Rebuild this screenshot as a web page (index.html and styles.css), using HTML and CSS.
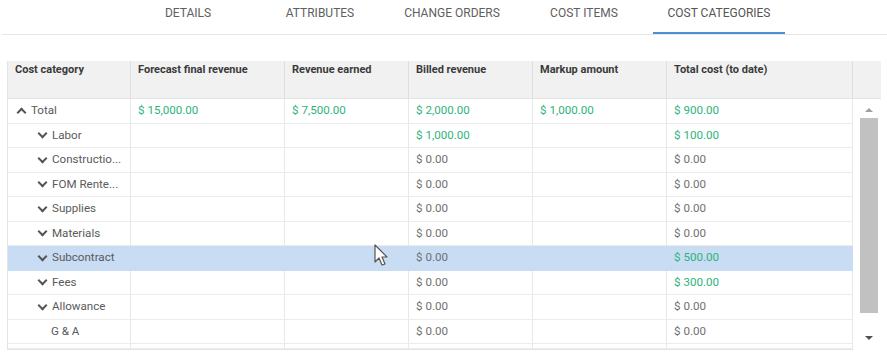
FILE: index.html
```
<!DOCTYPE html>
<html lang="en">
<head>
    <meta charset="UTF-8">
    <meta name="viewport" content="width=device-width, initial-scale=1.0">
    <title>Cost categories</title>
    <link rel="stylesheet" href="styles.css">
</head>
<body>
    <div class="tabs">
        <div class="tab">Details</div>
        <div class="tab">Attributes</div>
        <div class="tab">Change orders</div>
        <div class="tab">Cost items</div>
        <div class="tab active">Cost categories</div>
    </div>

    <div class="grid">
        <div class="grid-head">
            <div class="th c1">Cost category</div>
            <div class="th c2">Forecast final revenue</div>
            <div class="th c3">Revenue earned</div>
            <div class="th c4">Billed revenue</div>
            <div class="th c5">Markup amount</div>
            <div class="th c6">Total cost (to date)</div>
            <div class="th gutter"></div>
        </div>
        <div class="grid-body">
            <div class="rows">
                <div class="row">
                    <div class="td c1"><span class="caret up"></span>Total</div>
                    <div class="td c2 pos">$ 15,000.00</div>
                    <div class="td c3 pos">$ 7,500.00</div>
                    <div class="td c4 pos">$ 2,000.00</div>
                    <div class="td c5 pos">$ 1,000.00</div>
                    <div class="td c6 pos">$ 900.00</div>
                </div>
                <div class="row">
                    <div class="td c1 child"><span class="caret"></span>Labor</div>
                    <div class="td c2"></div>
                    <div class="td c3"></div>
                    <div class="td c4 pos">$ 1,000.00</div>
                    <div class="td c5"></div>
                    <div class="td c6 pos">$ 100.00</div>
                </div>
                <div class="row">
                    <div class="td c1 child"><span class="caret"></span>Constructio...</div>
                    <div class="td c2"></div>
                    <div class="td c3"></div>
                    <div class="td c4">$ 0.00</div>
                    <div class="td c5"></div>
                    <div class="td c6">$ 0.00</div>
                </div>
                <div class="row">
                    <div class="td c1 child"><span class="caret"></span>FOM Rente...</div>
                    <div class="td c2"></div>
                    <div class="td c3"></div>
                    <div class="td c4">$ 0.00</div>
                    <div class="td c5"></div>
                    <div class="td c6">$ 0.00</div>
                </div>
                <div class="row">
                    <div class="td c1 child"><span class="caret"></span>Supplies</div>
                    <div class="td c2"></div>
                    <div class="td c3"></div>
                    <div class="td c4">$ 0.00</div>
                    <div class="td c5"></div>
                    <div class="td c6">$ 0.00</div>
                </div>
                <div class="row">
                    <div class="td c1 child"><span class="caret"></span>Materials</div>
                    <div class="td c2"></div>
                    <div class="td c3"></div>
                    <div class="td c4">$ 0.00</div>
                    <div class="td c5"></div>
                    <div class="td c6">$ 0.00</div>
                </div>
                <div class="row selected">
                    <div class="td c1 child"><span class="caret"></span>Subcontract</div>
                    <div class="td c2"></div>
                    <div class="td c3"></div>
                    <div class="td c4">$ 0.00</div>
                    <div class="td c5"></div>
                    <div class="td c6 pos">$ 500.00</div>
                </div>
                <div class="row">
                    <div class="td c1 child"><span class="caret"></span>Fees</div>
                    <div class="td c2"></div>
                    <div class="td c3"></div>
                    <div class="td c4">$ 0.00</div>
                    <div class="td c5"></div>
                    <div class="td c6 pos">$ 300.00</div>
                </div>
                <div class="row">
                    <div class="td c1 child"><span class="caret"></span>Allowance</div>
                    <div class="td c2"></div>
                    <div class="td c3"></div>
                    <div class="td c4">$ 0.00</div>
                    <div class="td c5"></div>
                    <div class="td c6">$ 0.00</div>
                </div>
                <div class="row">
                    <div class="td c1 leaf">G &amp; A</div>
                    <div class="td c2"></div>
                    <div class="td c3"></div>
                    <div class="td c4">$ 0.00</div>
                    <div class="td c5"></div>
                    <div class="td c6">$ 0.00</div>
                </div>
                <div class="row partial">
                    <div class="td c1"></div>
                    <div class="td c2"></div>
                    <div class="td c3"></div>
                    <div class="td c4"></div>
                    <div class="td c5"></div>
                    <div class="td c6"></div>
                </div>
            </div>
            <div class="scrollbar">
                <div class="arrow up"></div>
                <div class="thumb"></div>
                <div class="arrow down"></div>
            </div>
        </div>
    </div>

    <svg class="cursor" width="16" height="24" viewBox="0 0 16 24">
        <path d="M1 1 L1 18 L5 14 L8 21 L11 20 L8 13 L13 13 Z" fill="#fff" stroke="#555" stroke-width="1.2" stroke-linejoin="round"/>
    </svg>
</body>
</html>
```

FILE: styles.css
```
body {
    margin: 0;
    font-family: Roboto, "Liberation Sans", Arial, sans-serif;
    background-color: #fff;
    color: #707070;
    position: relative;
    overflow: hidden;
    width: 887px;
    height: 357px;
}

/* tab strip */
.tabs {
    display: flex;
    padding-left: 120px;
    margin-left: 2px;
    height: 34px;
    border-bottom: 1px solid #e6e6e6;
}
.tab {
    width: 132px;
    text-align: center;
    font-size: 12px;
    text-transform: uppercase;
    color: #606060;
    padding-top: 6px;
    box-sizing: border-box;
}
.tab:nth-child(5) {
    margin-left: 3px;
}
.tab.active {
    border-bottom: 2px solid #4a90d9;
    color: #555;
}

/* grid */
.grid {
    margin: 26px 0 0 7px;
    width: 873px;
    border-left: 1px solid #e4e4e4;
}
.grid-head {
    display: flex;
    height: 37px;
    background-color: #f1f1f1;
    border-bottom: 1px solid #e4e4e4;
}
.th {
    box-sizing: border-box;
    font-size: 11px;
    font-weight: bold;
    color: #3a3a3a;
    padding: 2px 8px 0 7px;
    border-right: 1px solid #dedede;
}
.th.gutter {
    flex: 1;
    border-right: none;
}
.c1 { width: 123px; }
.c2 { width: 154px; }
.c3 { width: 124px; }
.c4 { width: 124px; }
.c5 { width: 134px; }
.c6 { width: 186px; }

.grid-body {
    display: flex;
}
.rows {
    width: 845px;
    border-bottom: 1px solid #e4e4e4;
}
.row {
    display: flex;
    height: 24.5px;
    box-sizing: border-box;
    border-bottom: 1px solid #ececec;
}
.row.selected {
    background-color: #c8dcf3;
    border-bottom-color: #c8dcf3;
}
.row.selected .td {
    border-right-color: transparent;
}
.row.partial {
    height: 5px;
}
.td {
    box-sizing: border-box;
    font-size: 11.6px;
    line-height: 23px;
    padding: 0 7px;
    border-right: 1px solid #e8e8e8;
    white-space: nowrap;
    overflow: hidden;
}
.td.pos {
    color: #2db37a;
}
.td.c1 {
    padding-left: 9px;
    color: #5a5a5a;
}
.td.c1.child {
    padding-left: 30px;
}
.td.c1.leaf {
    padding-left: 43px;
}
.caret {
    display: inline-block;
    width: 5px;
    height: 5px;
    border-left: 2px solid #555;
    border-bottom: 2px solid #555;
    transform: rotate(-45deg);
    margin: 0 6px 3px 1px;
    vertical-align: middle;
}
.caret.up {
    transform: rotate(135deg);
    margin: 4px 6px 0 1px;
}

.scrollbar {
    display: flex;
    flex-direction: column;
    align-items: center;
    width: 28px;
    padding-left: 4px;
    box-sizing: border-box;
}
.arrow {
    width: 0;
    height: 0;
    border-left: 4px solid transparent;
    border-right: 4px solid transparent;
}
.arrow.up {
    border-bottom: 4px solid #a0a0a0;
    margin: 9px 0 6px;
}
.arrow.down {
    border-top: 4px solid #505050;
    margin-top: 23px;
}
.thumb {
    width: 18px;
    height: 195px;
    background-color: #c1c1c1;
}

.cursor {
    position: absolute;
    left: 374px;
    top: 244px;
}
```
